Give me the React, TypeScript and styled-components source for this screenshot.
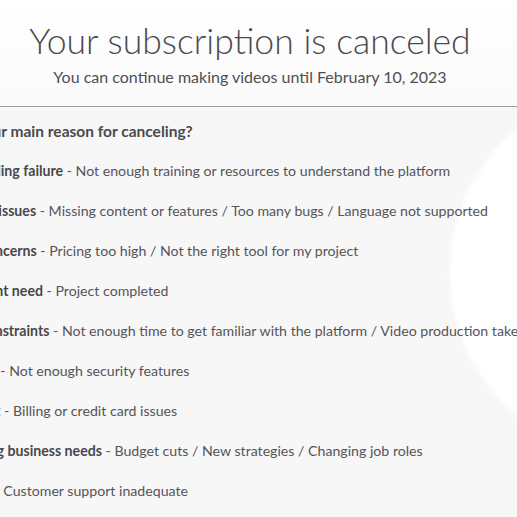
import React from "react";
import styled, { createGlobalStyle } from "styled-components";

const GlobalStyle = createGlobalStyle`
  html, body {
    margin: 0;
    padding: 0;
    overflow: hidden;
  }
  body {
    min-height: 517px;
    background:
      radial-gradient(circle 190px at 637px 272px, #ffffff 97%, rgba(255,255,255,0) 100%),
      #f7f7f7;
    font-family: "Lato", "Liberation Sans", sans-serif;
    color: #4b4a4e;
  }
`;

const Page = styled.div`
  width: 652px;
  margin-left: -76px;
`;

const Header = styled.header`
  text-align: center;
  padding: 21px 0 18px;
  border-bottom: 1px solid #9b9b9b;
  background: linear-gradient(#ffffff, #fafafa);
`;

const Title = styled.h1`
  margin: 0;
  font-size: 35.6px;
  line-height: 40px;
  font-weight: 300;
  color: #4b4a4e;
`;

const Subtitle = styled.p`
  margin: 5px 0 0;
  font-size: 16px;
  line-height: 22px;
  font-weight: 400;
  color: #4f4e52;
`;

const Form = styled.form`
  padding-top: 13px;
`;

const Question = styled.h2`
  margin: 0 0 8px;
  font-size: 15.5px;
  line-height: 22px;
  font-weight: 700;
  color: #4b4a4e;
  white-space: nowrap;
`;

const Options = styled.div`
  display: flex;
  flex-direction: column;
`;

const Option = styled.label`
  display: flex;
  align-items: center;
  gap: 5px;
  height: 40px;
  font-size: 14.15px;
  white-space: nowrap;
  color: #555459;
`;

const Radio = styled.input.attrs({ type: "radio", name: "reason" })`
  width: 16px;
  height: 16px;
  margin: 0;
  flex: none;
`;

const Label = styled.strong`
  font-weight: 700;
  color: #48474b;
`;

const reasons: [string, string][] = [
  ["Onboarding failure", "Not enough training or resources to understand the platform"],
  ["Product issues", "Missing content or features / Too many bugs / Language not supported"],
  ["Price concerns", "Pricing too high / Not the right tool for my project"],
  ["No urgent need", "Project completed"],
  ["Time constraints", "Not enough time to get familiar with the platform / Video production takes too long"],
  ["Security", "Not enough security features"],
  ["Payment", "Billing or credit card issues"],
  ["Changing business needs", "Budget cuts / New strategies / Changing job roles"],
  ["Service", "Customer support inadequate"],
];

export default function App() {
  return (
    <>
      <GlobalStyle />
      <Page>
        <Header>
          <Title>Your subscription is canceled</Title>
          <Subtitle>You can continue making videos until February 10, 2023</Subtitle>
        </Header>
        <Form>
          <Question>What's your main reason for canceling?</Question>
          <Options>
            {reasons.map(([label, desc]) => (
              <Option key={label}>
                <Radio />
                <span>
                  <Label>{label}</Label> - {desc}
                </span>
              </Option>
            ))}
          </Options>
        </Form>
      </Page>
    </>
  );
}
